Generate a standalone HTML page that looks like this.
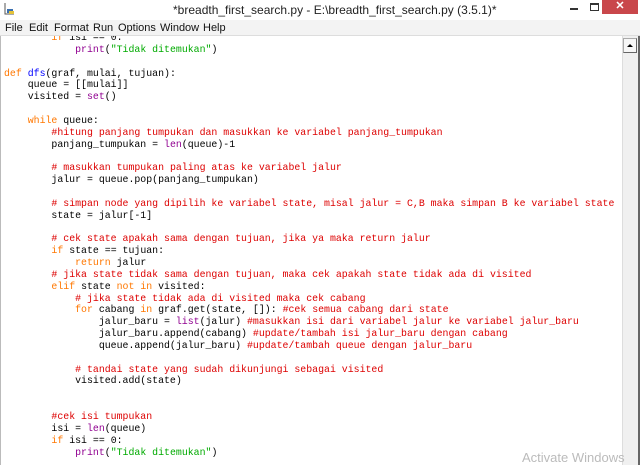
<!DOCTYPE html>
<html><head><meta charset="utf-8"><style>
*{margin:0;padding:0;box-sizing:border-box}
body{width:640px;height:465px;overflow:hidden;background:#fff;font-family:"Liberation Sans",sans-serif;position:relative}
#title{position:absolute;left:0;top:0;width:640px;height:20px;background:#fff;font-size:12px;color:#222}
#title .t{position:absolute;left:173px;top:3px}
#close{position:absolute;left:602px;top:0;width:36px;height:14px;background:#c9474b;color:#fff;font-size:11px;text-align:center;line-height:13px;font-weight:bold}
#menu{position:absolute;left:0;top:20px;width:640px;height:16px;background:#f3f3f3;border-bottom:1px solid #ddd;font-size:11px;color:#111}
#menu span{position:absolute;top:2px}
#ed{position:absolute;left:0;top:36px;width:622px;height:429px;overflow:hidden;border-left:1px solid #bbb}
pre{position:absolute;left:3px;top:-4px;font-family:"Liberation Mono",monospace;font-size:9.88px;line-height:11.84px;color:#000}
.k{color:#ff7700}.b{color:#900090}.s{color:#00aa00}.c{color:#dd0000}.f{color:#0000ff}
#sb{position:absolute;left:622px;top:36px;width:16px;height:429px;background:#f0f0f0;border-left:1px solid #ddd}
#sbr{position:absolute;left:638px;top:36px;width:2px;height:429px;background:#666}
#up{position:absolute;left:623px;top:38px;width:14px;height:15px;background:#f7f7f7;border:1px solid #aaa;border-right-color:#666;border-bottom-color:#666}
#up:after{content:"";position:absolute;left:3px;top:5px;border:3px solid transparent;border-bottom:3px solid #000;border-top:0;width:0}
#act{position:absolute;left:522px;top:450px;font-size:13px;color:#bbb}
</style></head><body>
<div id="title">
<svg style="position:absolute;left:2px;top:2px" width="14" height="14"><path d="M3 1v11h9" stroke="#555" fill="none"/><rect x="5" y="7" width="6" height="4" fill="#3a6fb0"/><rect x="7" y="9" width="5" height="3" fill="#e3c23a"/></svg>
<span class="t">*breadth_first_search.py - E:\breadth_first_search.py (3.5.1)*</span>
<div style="position:absolute;left:570px;top:8px;width:8px;height:2px;background:#333"></div>
<div style="position:absolute;left:590px;top:3px;width:9px;height:8px;border:1px solid #333;border-top-width:2px"></div>
<div id="close">✕</div>
</div>
<div id="menu"><span style="left:5px">File</span><span style="left:29px">Edit</span><span style="left:54px">Format</span><span style="left:93px">Run</span><span style="left:118px">Options</span><span style="left:160px">Window</span><span style="left:203px">Help</span></div>
<div id="ed"><pre>        <span class="k">if</span> isi == 0:
            <span class="b">print</span>(<span class="s">"Tidak ditemukan"</span>)

<span class="k">def</span> <span class="f">dfs</span>(graf, mulai, tujuan):
    queue = [[mulai]]
    visited = <span class="b">set</span>()

    <span class="k">while</span> queue:
        <span class="c">#hitung panjang tumpukan dan masukkan ke variabel panjang_tumpukan</span>
        panjang_tumpukan = <span class="b">len</span>(queue)-1

        <span class="c"># masukkan tumpukan paling atas ke variabel jalur</span>
        jalur = queue.pop(panjang_tumpukan)

        <span class="c"># simpan node yang dipilih ke variabel state, misal jalur = C,B maka simpan B ke variabel state</span>
        state = jalur[-1]

        <span class="c"># cek state apakah sama dengan tujuan, jika ya maka return jalur</span>
        <span class="k">if</span> state == tujuan:
            <span class="k">return</span> jalur
        <span class="c"># jika state tidak sama dengan tujuan, maka cek apakah state tidak ada di visited</span>
        <span class="k">elif</span> state <span class="k">not in</span> visited:
            <span class="c"># jika state tidak ada di visited maka cek cabang</span>
            <span class="k">for</span> cabang <span class="k">in</span> graf.get(state, []): <span class="c">#cek semua cabang dari state</span>
                jalur_baru = <span class="b">list</span>(jalur) <span class="c">#masukkan isi dari variabel jalur ke variabel jalur_baru</span>
                jalur_baru.append(cabang) <span class="c">#update/tambah isi jalur_baru dengan cabang</span>
                queue.append(jalur_baru) <span class="c">#update/tambah queue dengan jalur_baru</span>

            <span class="c"># tandai state yang sudah dikunjungi sebagai visited</span>
            visited.add(state)


        <span class="c">#cek isi tumpukan</span>
        isi = <span class="b">len</span>(queue)
        <span class="k">if</span> isi == 0:
            <span class="b">print</span>(<span class="s">"Tidak ditemukan"</span>)
</pre></div>
<div id="sb"></div><div id="sbr"></div><div id="up"></div>
<div id="act">Activate Windows</div>
</body></html>
